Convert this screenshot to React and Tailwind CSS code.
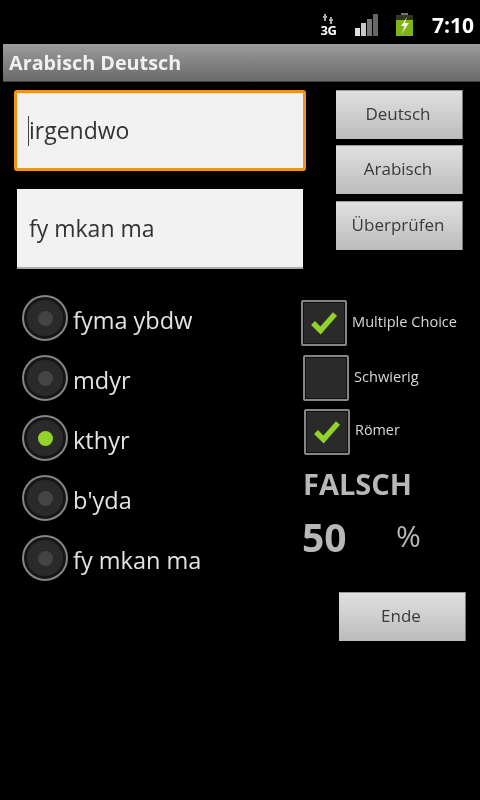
function Btn({ children, className = "" }) {
  return (
    <div className={"h-[49px] w-[127px] flex items-center justify-center pb-[2px] pr-[2px] bg-gradient-to-b from-[#e0e0e0] to-[#bcbcbc] border-t border-t-[#9a9a9a] border-r border-r-[#777] text-[17px] text-[#3a3a3a] " + className}>
      {children}
    </div>
  );
}
function Radio({ label, on }) {
  return (
    <div className="flex items-center h-[60px]">
      <div className="ml-[1px] w-[46px] h-[46px] rounded-full border-2 border-[#858585] bg-[#161616] flex items-center justify-center shrink-0">
        <div className="w-[36px] h-[36px] rounded-full bg-[#2a2a2a] flex items-center justify-center">
          {on ? (
            <div className="w-[15px] h-[15px] rounded-full bg-[#92d32a]" />
          ) : (
            <div className="w-[15px] h-[15px] rounded-full bg-[#444]" />
          )}
        </div>
      </div>
      <span className="ml-[5px] pt-[6px] text-[23.5px] leading-none text-[#e4e4e4]">{label}</span>
    </div>
  );
}
function Check({ label, on, className = "", textClass = "" }) {
  return (
    <div className={"flex items-center " + className}>
      <div className="w-[46px] h-[46px] rounded-[2px] border-2 border-[#858585] bg-[#2a2a2a] outline outline-1 outline-[#111] -outline-offset-3 flex items-center justify-center shrink-0">
        {on && (
          <svg width="28" height="24" viewBox="0 0 28 24">
            <path d="M3 12 L10.5 19.5 L25 3" fill="none" stroke="#92d32a" strokeWidth="5.5" />
          </svg>
        )}
      </div>
      <span className={"text-[#d8d8d8] font-medium leading-none pb-[3px] " + textClass}>{label}</span>
    </div>
  );
}
export default function App() {
  return (
    <div className="w-[480px] h-[800px] bg-black overflow-hidden font-['Open_Sans','Noto_Sans',sans-serif] blur-[0.7px]">
      {/* status bar */}
      <div className="h-[44px] flex items-start justify-end pr-[6px] pt-[14px]">
        <div className="flex flex-col items-center mr-[19px] text-white w-[15px]">
          <svg width="14" height="10" viewBox="0 0 14 10">
            <path d="M4 0V7M2 3h4M10 3V10M8 6h4" stroke="#aaa" strokeWidth="2" fill="none" />
          </svg>
          <span className="text-[13px] font-bold leading-[12px] tracking-[-0.5px]">3G</span>
        </div>
        <svg width="23" height="22" viewBox="0 0 23 22" className="mr-[18px]">
          <rect x="0" y="14" width="5" height="8" fill="#e0e0e0" />
          <rect x="6" y="9" width="5" height="13" fill="#c8c8c8" />
          <rect x="12" y="5" width="5" height="17" fill="#777" />
          <rect x="18" y="0" width="5" height="22" fill="#666" />
        </svg>
        <svg width="17" height="23" viewBox="0 0 17 23" className="mr-[19px] -mt-[1px]">
          <rect x="5" y="0" width="7" height="3" fill="#777" />
          <rect x="0" y="2" width="17" height="5" fill="#333" />
          <rect x="0" y="7" width="17" height="16" fill="#7fb418" />
          <path d="M11 4 L5 13 H8.5 L5.5 21 L13 10 H9 Z" fill="#f2f2e0" />
        </svg>
        <span className="text-[21px] font-bold text-white leading-none mt-[1px]">7:10</span>
      </div>
      {/* title bar */}
      <div className="ml-[3px] h-[38px] flex items-center pl-[6px] bg-gradient-to-b from-[#9c9c9c] to-[#6a6a6a] border-b border-b-[#444]">
        <span className="text-[19.8px] font-bold text-[#f0f0f0] leading-none">Arabisch Deutsch</span>
      </div>
      {/* main */}
      <div className="flex mt-[8px]">
        <div className="w-[336px] shrink-0">
          <div className="ml-[14px] w-[292px] h-[81px] rounded-[3px] border-[3px] border-[#f0921e] bg-[#f2f2f2] flex items-center pl-[11px] text-[23px] text-[#333]">
            <span className="w-[1px] h-[30px] bg-[#444]" />
            <span>irgendwo</span>
          </div>
          <div className="ml-[17px] mt-[18px] w-[286px] h-[80px] bg-[#f2f2f2] border-b-2 border-b-[#aaa] flex items-center pl-[12px] text-[23px] text-[#333]">
            fy mkan ma
          </div>
          <div className="ml-[21px] mt-[19px]">
            <Radio label="fyma ybdw" />
            <Radio label="mdyr" />
            <Radio label="kthyr" on />
            <Radio label="b'yda" />
            <Radio label="fy mkan ma" />
          </div>
        </div>
        <div className="w-[144px] shrink-0">
          <div className="flex flex-col">
            <Btn>Deutsch</Btn>
            <Btn className="mt-[6px]">Arabisch</Btn>
            <Btn className="mt-[7px]">Überprüfen</Btn>
          </div>
          <div className="-ml-[35px] mt-[50px] flex flex-col">
            <Check on label="Multiple Choice" textClass="ml-[5px] text-[14.6px]" />
            <Check label="Schwierig" className="ml-[2px] mt-[9px]" textClass="ml-[5px] text-[14.6px]" />
            <Check on label="Römer" className="ml-[3px] mt-[8px]" textClass="ml-[5px] text-[14.4px]" />
            <div className="ml-[2px] mt-[13px] text-[29px] font-bold leading-[32px] text-[#b8b8b8]">FALSCH</div>
            <div className="flex items-center mt-[13px] h-[46px]">
              <span className="ml-[1px] w-[94px] text-[39px] font-bold leading-none text-[#b8b8b8]">50</span>
              <span className="text-[30px] leading-none text-[#b8b8b8]">%</span>
            </div>
          </div>
          <div className="mt-[33px] ml-[3px]">
            <Btn>Ende</Btn>
          </div>
        </div>
      </div>
    </div>
  );
}
